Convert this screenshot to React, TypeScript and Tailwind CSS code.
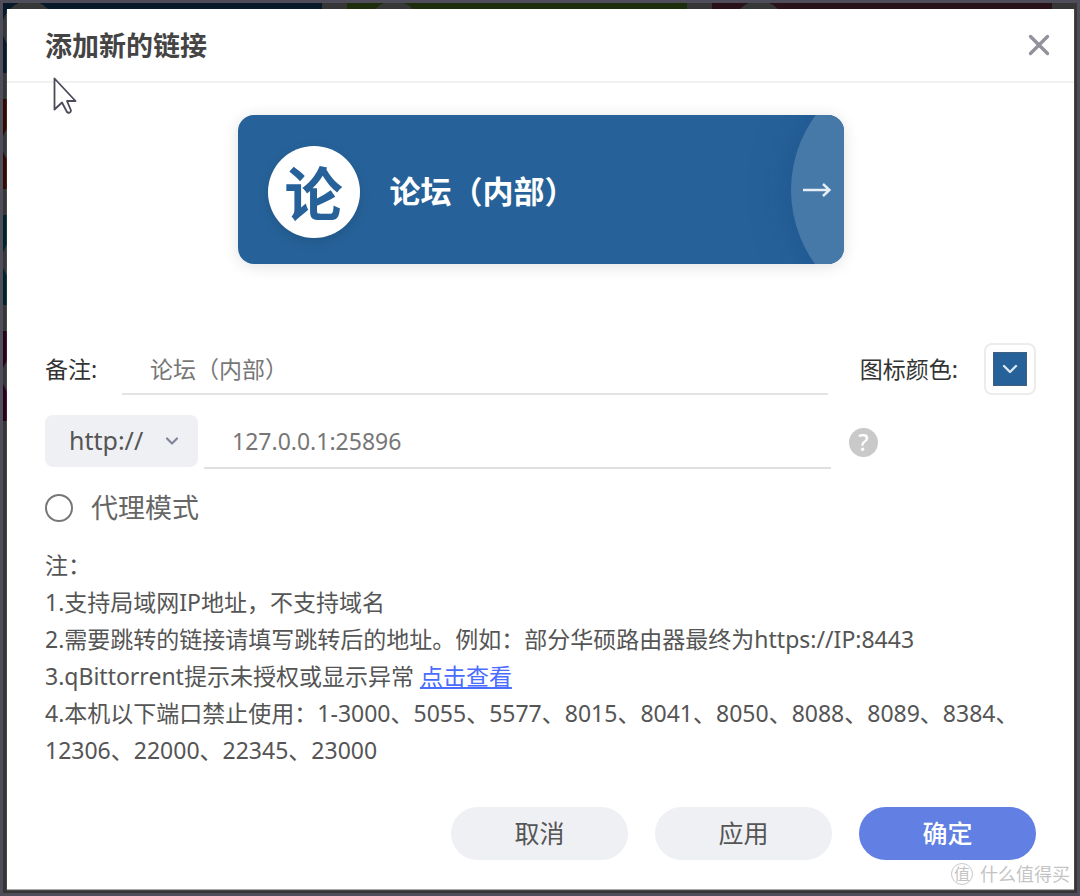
import { useState } from "react";
import { ChevronDown, X } from "lucide-react";
import clsx from "clsx";

const tiles = [
  "bg-[#081a2a]",
  "bg-[#1c2e0c]",
  "bg-[#29121a]",
  "bg-[#300900]",
  "bg-[#363636]",
  "bg-[#363636]",
  "bg-[#00222c]",
  "bg-[#363636]",
  "bg-[#363636]",
  "bg-[#28001a]",
  "bg-[#363636]",
  "bg-[#363636]",
];

function Backdrop() {
  return (
    <div aria-hidden="true" className="absolute inset-0 overflow-hidden">
      <div className="-mt-5 -ml-[21px] grid grid-cols-[repeat(3,340px)] gap-x-[25px] gap-y-[26px]">
        {tiles.map((color, i) => (
          <div key={i} className={clsx("flex h-[90px] items-center pl-5", color)}>
            <span className="size-[54px] rounded-full bg-[#363838]" />
          </div>
        ))}
      </div>
    </div>
  );
}

function PreviewCard({ name }: { name: string }) {
  return (
    <div className="relative mx-auto flex h-[149px] w-full max-w-[606px] items-center overflow-hidden rounded-2xl bg-[#266299] pt-1 pl-[30px] shadow-[0_2px_16px_rgba(0,0,0,0.12)]">
      <span className="flex size-[92px] items-center justify-center rounded-full bg-white pt-1 text-[58px] leading-none font-bold text-[#266299] shadow-[0_4px_12px_rgba(0,0,0,0.12)]">
        {name.charAt(0)}
      </span>
      <span className="ml-[30px] text-[31px] leading-none font-bold text-white">{name}</span>
      <span className="absolute top-1/2 -right-[199px] size-[252px] -translate-y-1/2 rounded-full bg-[#4779a8] shadow-[0_0_40px_rgba(20,60,120,0.35)]" />
      <svg
        aria-hidden="true"
        viewBox="0 0 30 16"
        className="absolute top-[67px] right-3 h-4 w-[30px]"
        fill="none"
        stroke="#e6edf4"
        strokeWidth="2.4"
      >
        <path d="M1 8h26M21 2l6.500 6-6.500 6" />
      </svg>
    </div>
  );
}

function Cursor() {
  return (
    <svg aria-hidden="true" viewBox="0 0 24 38" className="absolute top-[68px] left-[46px] h-[38px] w-6">
      <path
        d="M1.500 1.500v31l7.500-7 5 9.500c1.500 1.500 4 .5 4-1.500l-4-9.500h8.500z"
        fill="#fff"
        stroke="#4a4a58"
        strokeWidth="1.800"
        strokeLinejoin="round"
      />
    </svg>
  );
}

function Watermark() {
  return (
    <div className="absolute right-1 bottom-1 flex items-center gap-[7px] text-lg leading-none text-[#c4c4c4]">
      <span className="flex size-[22px] items-center justify-center rounded-full border border-[#c8c8c8] text-base leading-none">
        值
      </span>
      <span>什么值得买</span>
    </div>
  );
}

export default function App() {
  const [name, setName] = useState("论坛（内部）");
  const [address, setAddress] = useState("127.0.0.1:25896");

  return (
    <main className="relative min-h-screen border-[3px] border-[#4e4d59] bg-[#363636] pt-1.5 pr-[3px] pb-1 pl-1 font-['Noto_Sans','Noto_Sans_CJK_SC',sans-serif] text-[23px] text-[#555]">
      <Backdrop />

      <section
        role="dialog"
        aria-labelledby="dialog-title"
        className="relative bg-white shadow-[0_1px_1px_#aaa]"
      >
        <header className="flex h-[74px] items-center justify-between border-b-2 border-[#f1f1f1] px-[38px]">
          <h1 id="dialog-title" className="text-[27px] leading-none font-bold text-[#444]">
            添加新的链接
          </h1>
          <button type="button" aria-label="关闭" className="-mr-5 text-[#91929b]">
            <X size={34} strokeWidth={2.4} />
          </button>
        </header>

        <form className="px-[38px] pt-8 pb-[29px]" onSubmit={(e) => e.preventDefault()}>
          <PreviewCard name={name} />

          <div className="mt-[79px] flex h-[52px] items-center">
            <label htmlFor="name" className="w-[77px] text-[#333]">
              备注:
            </label>
            <input
              id="name"
              value={name}
              onChange={(e) => setName(e.target.value)}
              className="h-full min-w-0 flex-1 border-b-2 border-[#e4e4e4] px-7 text-[#777] outline-none"
            />
            <span id="color-label" className="ml-8 text-[#333]">
              图标颜色:
            </span>
            <button
              type="button"
              aria-labelledby="color-label"
              className="ml-[26px] flex size-[52px] items-center justify-center rounded-lg border-2 border-[#ececec]"
            >
              <span className="flex size-[34px] items-center justify-center border border-[#41607f] bg-[#266299] text-[#dbe6f0]">
                <ChevronDown size={24} strokeWidth={2.4} />
              </span>
            </button>
          </div>

          <div className="mt-5 flex h-[54px] items-start">
            <div className="relative">
              <select
                aria-label="协议"
                className="h-[52px] w-[153px] appearance-none rounded-lg bg-[#eff0f4] pl-6 text-[25px] outline-none"
              >
                <option>http://</option>
                <option>https://</option>
              </select>
              <ChevronDown
                size={20}
                strokeWidth={2.6}
                className="pointer-events-none absolute top-4 right-4 text-[#80839a]"
              />
            </div>
            <input
              aria-label="地址"
              value={address}
              onChange={(e) => setAddress(e.target.value)}
              className="ml-1.5 h-full min-w-0 flex-1 border-b-2 border-[#e0e0e0] px-7 text-[#777] outline-none"
            />
            <button
              type="button"
              aria-label="帮助"
              className="mt-[13px] mr-[158px] ml-[18px] flex size-[29px] items-center justify-center rounded-full bg-[#c9c9c9] text-[23px] leading-none font-medium text-white"
            >
              ?
            </button>
          </div>

          <label className="mt-[25px] flex h-7 items-center gap-[18px] text-[27px] text-[#666]">
            <input
              type="radio"
              name="proxy"
              className="size-7 appearance-none rounded-full border-2 border-[#777] bg-white"
            />
            代理模式
          </label>

          <div className="mt-[25px] leading-[37px]">
            <p>注：</p>
            <p>1.支持局域网IP地址，不支持域名</p>
            <p>2.需要跳转的链接请填写跳转后的地址。例如：部分华硕路由器最终为https://IP:8443</p>
            <p>
              3.qBittorrent提示未授权或显示异常{" "}
              <a href="#help" className="text-[#4a6cff] underline">
                点击查看
              </a>
            </p>
            <p>
              4.本机以下端口禁止使用：1-3000、5055、5577、8015、8041、8050、8088、8089、8384、12306、22000、22345、23000
            </p>
          </div>

          <footer className="mt-[38px] flex justify-end gap-[27px] text-[25px]">
            <button type="button" className="h-[53px] w-[177px] rounded-full bg-[#eff0f4]">
              取消
            </button>
            <button type="button" className="h-[53px] w-[177px] rounded-full bg-[#eff0f4]">
              应用
            </button>
            <button type="submit" className="h-[53px] w-[177px] rounded-full bg-[#627fe3] font-medium text-white">
              确定
            </button>
          </footer>
        </form>

        <Cursor />
        <Watermark />
      </section>
    </main>
  );
}
